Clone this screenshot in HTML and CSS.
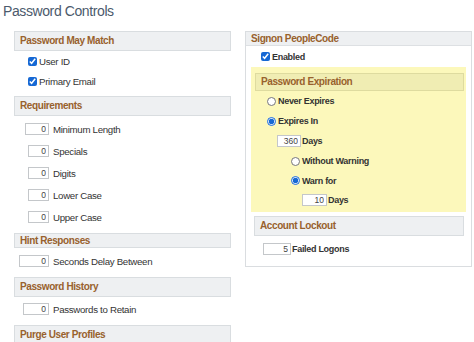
FILE: index.html
```html
<!DOCTYPE html>
<html lang="en">
<head>
    <meta charset="UTF-8">
    <meta name="viewport" content="width=device-width, initial-scale=1.0">
    <title>Password Controls</title>
    <link rel="stylesheet" href="styles.css">
</head>
<body>
 <h1 class="title">Password Controls</h1>
 <div class="page">

    <div class="left">
        <div class="hdr">Password May Match</div>
        <div class="checks">
            <label class="chk"><input type="checkbox" checked> User ID</label>
            <label class="chk"><input type="checkbox" checked> Primary Email</label>
        </div>

        <div class="hdr gap">Requirements</div>
        <div class="reqs">
            <div class="row"><span class="numbox"><input class="num w24" value="0" readonly></span>Minimum Length</div>
            <div class="row"><span class="numbox"><input class="num w21" value="0" readonly></span>Specials</div>
            <div class="row"><span class="numbox"><input class="num w21" value="0" readonly></span>Digits</div>
            <div class="row"><span class="numbox"><input class="num w21" value="0" readonly></span>Lower Case</div>
            <div class="row"><span class="numbox"><input class="num w21" value="0" readonly></span>Upper Case</div>
        </div>

        <div class="hdr gap short">Hint Responses</div>
        <div class="row top2"><span class="numbox"><input class="num w30" value="0" readonly></span>Seconds Delay Between</div>

        <div class="hdr gap">Password History</div>
        <div class="row top1"><span class="numbox"><input class="num w26" value="0" readonly></span>Passwords to Retain</div>

        <div class="hdr gap">Purge User Profiles</div>
    </div>

    <div class="panel">
        <div class="panel-hdr">Signon PeopleCode</div>
        <label class="enabled"><input type="checkbox" checked> Enabled</label>

        <div class="yellow">
            <div class="hdr yhdr">Password Expiration</div>
            <label class="opt ind1"><input type="radio" name="exp"> Never Expires</label>
            <label class="opt ind1"><input type="radio" name="exp" checked> Expires In</label>
            <div class="opt ind2"><input class="num w24" value="360" readonly>Days</div>
            <label class="opt ind3"><input type="radio" name="warn"> Without Warning</label>
            <label class="opt ind3 h19"><input type="radio" name="warn" checked> Warn for</label>
            <div class="opt ind4 h19"><input class="num w25" value="10" readonly>Days</div>
        </div>

        <div class="hdr lock">Account Lockout</div>
        <div class="opt ind5 lockrow"><input class="num w28" value="5" readonly>Failed Logons</div>
    </div>

 </div>
</body>
</html>
```

FILE: styles.css
```css
*{
    margin: 0;
    padding: 0;
    box-sizing: border-box;
}

body{
    width: 474px;
    height: 342px;
    overflow: hidden;
    background-color: white;
    font-family: "Liberation Sans", Arial, sans-serif;
    color: #333;
}

.title{
    height: 31px;
    padding: 2px 0 0 3px;
    font-size: 14px;
    font-weight: normal;
    letter-spacing: -0.4px;
    line-height: 18px;
    color: #4b5a6c;
}

.page{
    display: flex;
}

.left{
    width: 217px;
    margin-left: 14px;
}

/* section headers */
.hdr{
    height: 20px;
    padding-left: 5px;
    background-color: #eef0f2;
    border: 1px solid #d9dde0;
    color: #98612d;
    font-size: 10px;
    font-weight: bold;
    letter-spacing: -0.4px;
    line-height: 18px;
}

.hdr.short{
    height: 15px;
    line-height: 13px;
}

.gap{
    margin-top: 5px;
}

.checks{
    padding-left: 14px;
    margin-bottom: 0;
}

.chk{
    display: flex;
    align-items: center;
    height: 20px;
    font-size: 9.7px;
    letter-spacing: -0.3px;
}

input[type=checkbox], input[type=radio]{
    width: 9px;
    height: 9px;
    margin: 0 2px 0 0;
    accent-color: #1668d4;
}

.reqs{
    padding-top: 2px;
}

.row{
    display: flex;
    align-items: center;
    height: 22px;
    font-size: 9.7px;
    letter-spacing: -0.3px;
}

.top2{
    margin-top: 2px;
}

.top1{
    margin-top: 1px;
}

.numbox{
    display: flex;
    justify-content: flex-end;
    width: 35px;
    margin-right: 4px;
}

.num{
    height: 12px;
    padding: 0 2px 0 0;
    border: 1px solid #c4c7ca;
    background: white;
    font-family: "Liberation Sans", Arial, sans-serif;
    font-size: 8.5px;
    color: #444;
    text-align: right;
    outline: none;
}

.w21{ width: 21px; }
.w24{ width: 24px; }
.w25{ width: 25px; }
.w26{ width: 26px; }
.w28{ width: 28px; }
.w30{ width: 30px; }

/* right panel */
.panel{
    width: 227px;
    height: 236px;
    margin-left: 14px;
    border: 1px solid #dadde0;
}

.panel-hdr{
    height: 14px;
    padding-left: 5px;
    background-color: #eef0f2;
    border-bottom: 1px solid #dde0e3;
    color: #98612d;
    font-size: 10px;
    font-weight: bold;
    letter-spacing: -0.4px;
    line-height: 13px;
}

.enabled{
    display: flex;
    align-items: center;
    height: 21px;
    padding-left: 15px;
    font-size: 9px;
    font-weight: bold;
    letter-spacing: -0.3px;
}

.yellow{
    width: 215px;
    margin-left: 5px;
    padding: 6px 2px 3px 4px;
    background-color: #fcf8bb;
}

.yhdr{
    background-color: #f0edb3;
    border-color: #dedb9f;
    height: 18px;
    line-height: 16px;
}

.opt{
    display: flex;
    align-items: center;
    height: 20px;
    font-size: 9px;
    font-weight: bold;
    letter-spacing: -0.3px;
}

.opt .num{
    margin-right: 1px;
    font-weight: normal;
}

.h19{
    height: 19px;
}

.ind1{ padding-left: 12px; }
.ind2{ padding-left: 22px; }
.ind3{ padding-left: 36px; }
.ind4{ padding-left: 47px; }
.ind5{ padding-left: 17px; }

.lock{
    width: 210px;
    margin: 4px 0 0 8px;
}

.lockrow{
    height: 25px;
}
```
